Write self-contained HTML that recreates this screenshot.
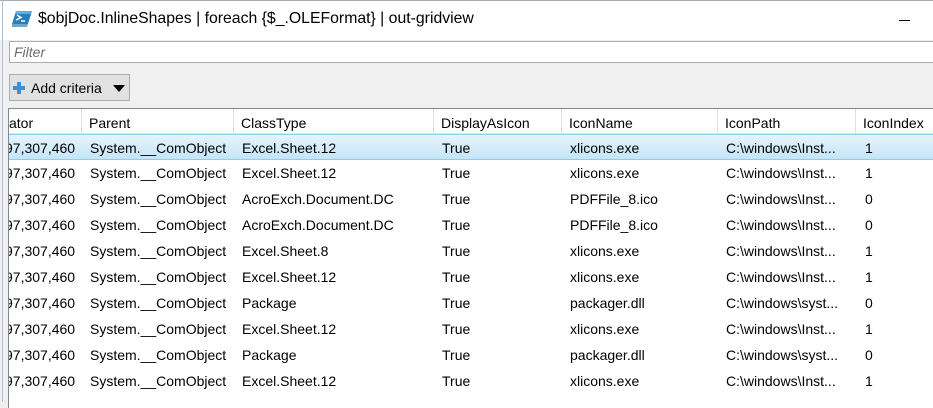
<!DOCTYPE html>
<html><head><meta charset="utf-8"><style>
*{margin:0;padding:0;box-sizing:border-box}
body{width:933px;height:402px;overflow:hidden;background:#f0f0f0;font-family:"Liberation Sans",sans-serif;font-size:14px;color:#000;position:relative}
.top{position:absolute;left:0;top:0;width:933px;height:40px;background:#fff;border-top:1px solid #aab;}
.lb{position:absolute;left:2px;top:0;width:1px;height:402px;background:#a9c3da}
.title{position:absolute;left:38px;top:9px;font-size:15.8px}
.min{position:absolute;left:899px;top:19px;width:11px;height:1px;background:#000}
.filter{position:absolute;left:9px;top:41px;width:930px;height:22px;background:#fff;border:1px solid #adadad;border-right:none}
.filter span{position:absolute;left:4px;top:2px;color:#6d6d6d;font-style:italic;font-size:14px}
.btn{position:absolute;left:9px;top:74px;width:121px;height:27px;background:#e1e1e1;border:1px solid #adadad}
.btn span{position:absolute;left:21px;top:5px;font-size:14px}
.grid{position:absolute;left:8px;top:108px;width:930px;height:300px;background:#fff;border-left:1px solid #828790;border-top:1px solid #828790}
.hdr{position:absolute;left:0;top:0;height:25px;width:930px;background:#fff;border-bottom:1px solid #e5e5e5}
.h{position:absolute;top:0;height:25px;border-right:1px solid #e0e0e0;padding:6px 0 0 7px;white-space:nowrap;overflow:hidden}
.row{position:absolute;left:0;width:930px;height:26px}
.row.sel{background:linear-gradient(#e6f4fd,#c5e5f8);border-top:1px solid #8fcdf0;border-bottom:1px solid #8fcdf0}
.c{position:absolute;top:5px;white-space:nowrap}
</style></head><body>
<div class="top">
<svg style="position:absolute;left:12px;top:10px" width="20" height="16" viewBox="0 0 20 16"><path d="M4 0H20L16 13H0Z" fill="#2a7fb8"/><path d="M4 0H20L19 3H3Z" fill="#5fb0e0"/><path d="M5 4L9 6.5L4 9" stroke="#fff" stroke-width="1.5" fill="none"/><path d="M9 10H13" stroke="#fff" stroke-width="1.5"/><path d="M0 13H16L15 16H0Z" fill="#6aa8cc"/></svg>
<div class="title">$objDoc.InlineShapes | foreach {$_.OLEFormat} | out-gridview</div>
<div class="min"></div>
</div>
<div class="lb"></div>
<div class="filter"><span>Filter</span></div>
<div class="btn"><svg style="position:absolute;left:3px;top:7px" width="12" height="12" viewBox="0 0 12 12"><path d="M4 0H8V4H12V8H8V12H4V8H0V4H4Z" fill="#3a8fd6"/></svg><span>Add criteria</span>
<svg style="position:absolute;left:103px;top:10px" width="12" height="7" viewBox="0 0 12 7"><path d="M0 0H12L6 7Z" fill="#000"/></svg></div>
<div class="grid">
<div class="hdr">
<div class="h" style="left:-7px;width:80px">ator</div>
<div class="h" style="left:73px;width:152px">Parent</div>
<div class="h" style="left:225px;width:200px">ClassType</div>
<div class="h" style="left:425px;width:128px">DisplayAsIcon</div>
<div class="h" style="left:553px;width:156px">IconName</div>
<div class="h" style="left:709px;width:138px">IconPath</div>
<div class="h" style="left:847px;width:90px">IconIndex</div>
</div>
</div>
<div style="position:absolute;left:9px;top:134px;width:930px;height:270px;overflow:hidden">
<div class="row sel" style="top:0"><span class="c" style="left:-4px">97,307,460</span><span class="c" style="left:81px">System.__ComObject</span><span class="c" style="left:233px">Excel.Sheet.12</span><span class="c" style="left:433px">True</span><span class="c" style="left:561px">xlicons.exe</span><span class="c" style="left:717px">C:\windows\Inst...</span><span class="c" style="left:856px">1</span></div>
<div class="row" style="top:26px"><span class="c" style="left:-4px">97,307,460</span><span class="c" style="left:81px">System.__ComObject</span><span class="c" style="left:233px">Excel.Sheet.12</span><span class="c" style="left:433px">True</span><span class="c" style="left:561px">xlicons.exe</span><span class="c" style="left:717px">C:\windows\Inst...</span><span class="c" style="left:856px">1</span></div>
<div class="row" style="top:52px"><span class="c" style="left:-4px">97,307,460</span><span class="c" style="left:81px">System.__ComObject</span><span class="c" style="left:233px">AcroExch.Document.DC</span><span class="c" style="left:433px">True</span><span class="c" style="left:561px">PDFFile_8.ico</span><span class="c" style="left:717px">C:\windows\Inst...</span><span class="c" style="left:856px">0</span></div>
<div class="row" style="top:78px"><span class="c" style="left:-4px">97,307,460</span><span class="c" style="left:81px">System.__ComObject</span><span class="c" style="left:233px">AcroExch.Document.DC</span><span class="c" style="left:433px">True</span><span class="c" style="left:561px">PDFFile_8.ico</span><span class="c" style="left:717px">C:\windows\Inst...</span><span class="c" style="left:856px">0</span></div>
<div class="row" style="top:104px"><span class="c" style="left:-4px">97,307,460</span><span class="c" style="left:81px">System.__ComObject</span><span class="c" style="left:233px">Excel.Sheet.8</span><span class="c" style="left:433px">True</span><span class="c" style="left:561px">xlicons.exe</span><span class="c" style="left:717px">C:\windows\Inst...</span><span class="c" style="left:856px">1</span></div>
<div class="row" style="top:130px"><span class="c" style="left:-4px">97,307,460</span><span class="c" style="left:81px">System.__ComObject</span><span class="c" style="left:233px">Excel.Sheet.12</span><span class="c" style="left:433px">True</span><span class="c" style="left:561px">xlicons.exe</span><span class="c" style="left:717px">C:\windows\Inst...</span><span class="c" style="left:856px">1</span></div>
<div class="row" style="top:156px"><span class="c" style="left:-4px">97,307,460</span><span class="c" style="left:81px">System.__ComObject</span><span class="c" style="left:233px">Package</span><span class="c" style="left:433px">True</span><span class="c" style="left:561px">packager.dll</span><span class="c" style="left:717px">C:\windows\syst...</span><span class="c" style="left:856px">0</span></div>
<div class="row" style="top:182px"><span class="c" style="left:-4px">97,307,460</span><span class="c" style="left:81px">System.__ComObject</span><span class="c" style="left:233px">Excel.Sheet.12</span><span class="c" style="left:433px">True</span><span class="c" style="left:561px">xlicons.exe</span><span class="c" style="left:717px">C:\windows\Inst...</span><span class="c" style="left:856px">1</span></div>
<div class="row" style="top:208px"><span class="c" style="left:-4px">97,307,460</span><span class="c" style="left:81px">System.__ComObject</span><span class="c" style="left:233px">Package</span><span class="c" style="left:433px">True</span><span class="c" style="left:561px">packager.dll</span><span class="c" style="left:717px">C:\windows\syst...</span><span class="c" style="left:856px">0</span></div>
<div class="row" style="top:234px"><span class="c" style="left:-4px">97,307,460</span><span class="c" style="left:81px">System.__ComObject</span><span class="c" style="left:233px">Excel.Sheet.12</span><span class="c" style="left:433px">True</span><span class="c" style="left:561px">xlicons.exe</span><span class="c" style="left:717px">C:\windows\Inst...</span><span class="c" style="left:856px">1</span></div>
</div>
</body></html>
